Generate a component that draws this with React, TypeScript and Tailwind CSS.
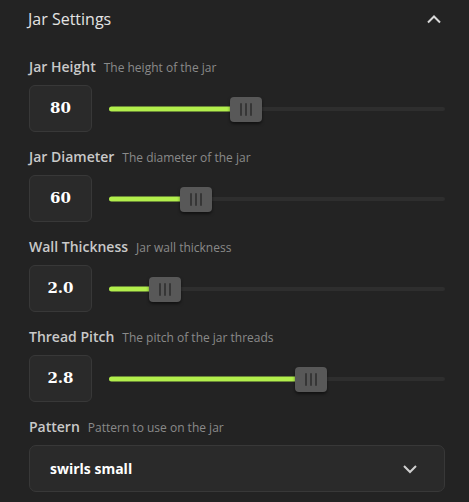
import React from "react";

type Row = { label: string; desc: string; value: string; thumb: number };

const rows: Row[] = [
  { label: "Jar Height", desc: "The height of the jar", value: "80", thumb: 121 },
  { label: "Jar Diameter", desc: "The diameter of the jar", value: "60", thumb: 71 },
  { label: "Wall Thickness", desc: "Jar wall thickness", value: "2.0", thumb: 40 },
  { label: "Thread Pitch", desc: "The pitch of the jar threads", value: "2.8", thumb: 186 },
];

function Label({ label, desc }: { label: string; desc: string }) {
  return (
    <div className="flex items-baseline gap-2 h-5">
      <span className="text-[14px] font-semibold text-[#c9c9c9] leading-5">{label}</span>
      <span className="text-[12px] text-[#8a8a8a] leading-5">{desc}</span>
    </div>
  );
}

function Slider({ thumb }: { thumb: number }) {
  return (
    <div className="relative flex-1 h-[47px] flex items-center">
      <div className="w-full h-[4px] rounded-full bg-[#2e2e2e]" />
      <div
        className="absolute left-0 top-1/2 -translate-y-1/2 h-[5px] rounded-full bg-[#b2ee4c]"
        style={{ width: thumb + 4 }}
      />
      <div
        className="absolute top-[12px] w-[32px] h-[25px] rounded-[4px] bg-[#585858] shadow-[0_2px_3px_rgba(0,0,0,0.5)] flex items-center justify-center gap-[3px]"
        style={{ left: thumb }}
      >
        <div className="w-[2px] h-[13px] bg-[#363636] rounded-[1px]" />
        <div className="w-[2px] h-[13px] bg-[#363636] rounded-[1px]" />
        <div className="w-[2px] h-[13px] bg-[#363636] rounded-[1px]" />
      </div>
    </div>
  );
}

export default function App() {
  return (
    <div
      className="w-[469px] h-[502px] bg-[#232323] overflow-hidden"
      style={{ fontFamily: "'Open Sans', sans-serif" }}
    >
      <div className="flex items-center justify-between pl-[28px] pr-[27px] h-[38px]">
        <span className="text-[16px] text-[#e4e4e4]">Jar Settings</span>
        <svg width="16" height="10" viewBox="0 0 16 10" fill="none">
          <path d="M2 8.5 L8 2.5 L14 8.5" stroke="#d8d8d8" strokeWidth="2" />
        </svg>
      </div>
      <div className="pl-[29px] pr-[24px] pt-[19px] flex flex-col">
        {rows.map((r) => (
          <div key={r.label} className="flex flex-col gap-2 mb-[15px]">
            <Label label={r.label} desc={r.desc} />
            <div className="flex items-center gap-[17px]">
              <div
                className="w-[63px] h-[47px] rounded-[6px] bg-[#2a2a2a] border border-[#383838] flex items-center justify-center text-[15px] font-bold text-white"
                style={{ fontFamily: "'DejaVu Serif', serif" }}
              >
                {r.value}
              </div>
              <Slider thumb={r.thumb} />
            </div>
          </div>
        ))}
        <div className="flex flex-col gap-2">
          <Label label="Pattern" desc="Pattern to use on the jar" />
          <div className="h-[47px] rounded-[7px] bg-[#2a2a2a] border border-[#383838] flex items-center justify-between pl-[20px] pr-[26px]">
            <span className="text-[14px] font-bold text-white">swirls small</span>
            <svg width="16" height="10" viewBox="0 0 16 10" fill="none">
              <path d="M2 2 L8 8 L14 2" stroke="#d0d0d0" strokeWidth="2" />
            </svg>
          </div>
        </div>
      </div>
    </div>
  );
}
